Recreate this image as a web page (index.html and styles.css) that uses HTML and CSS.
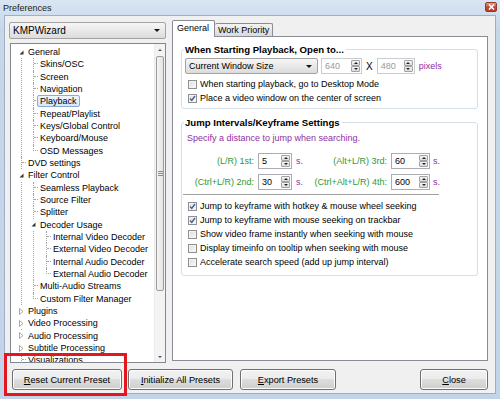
FILE: index.html
```html
<!DOCTYPE html>
<html>
<head>
    <meta charset="utf-8" />
    <title>Preferences</title>
    <link rel="stylesheet" href="styles.css">
</head>
<body>
<div class="window">
    <div class="titlebar">
        <span class="title">Preferences</span>
        <span class="close"><svg width="7" height="6" viewBox="0 0 7 6"><path d="M1 0.5L6 5.5M6 0.5L1 5.5" stroke="#fff" stroke-width="1.6"/></svg></span>
    </div>
    <div class="client">
        <div class="main">
            <div class="left">
                <div class="combo preset"><span>KMPWizard</span><i class="arrow"></i></div>
                <div class="tree">
                    <ul class="tree-list">
                        <li><div class="row"><span class="exp"><svg width="5" height="5" viewBox="0 0 5 5"><path d="M4.5 0.5V4.5H0.5Z" fill="#333"/></svg></span><span class="txt">General</span></div>
                            <ul>
                                <li><div class="row"><i class="conn"></i><span class="txt">Skins/OSC</span></div></li>
                                <li><div class="row"><i class="conn"></i><span class="txt">Screen</span></div></li>
                                <li><div class="row"><i class="conn"></i><span class="txt">Navigation</span></div></li>
                                <li><div class="row"><i class="conn"></i><span class="txt sel">Playback</span></div></li>
                                <li><div class="row"><i class="conn"></i><span class="txt">Repeat/Playlist</span></div></li>
                                <li><div class="row"><i class="conn"></i><span class="txt">Keys/Global Control</span></div></li>
                                <li><div class="row"><i class="conn"></i><span class="txt">Keyboard/Mouse</span></div></li>
                                <li><div class="row"><i class="conn"></i><span class="txt">OSD Messages</span></div></li>
                            </ul>
                        </li>
                        <li><div class="row"><i class="conn"></i><span class="txt">DVD settings</span></div></li>
                        <li><div class="row"><span class="exp"><svg width="5" height="5" viewBox="0 0 5 5"><path d="M4.5 0.5V4.5H0.5Z" fill="#333"/></svg></span><span class="txt">Filter Control</span></div>
                            <ul>
                                <li><div class="row"><i class="conn"></i><span class="txt">Seamless Playback</span></div></li>
                                <li><div class="row"><i class="conn"></i><span class="txt">Source Filter</span></div></li>
                                <li><div class="row"><i class="conn"></i><span class="txt">Splitter</span></div></li>
                                <li><div class="row"><span class="exp"><svg width="5" height="5" viewBox="0 0 5 5"><path d="M4.5 0.5V4.5H0.5Z" fill="#333"/></svg></span><span class="txt">Decoder Usage</span></div>
                                    <ul>
                                        <li><div class="row"><i class="conn"></i><span class="txt">Internal Video Decoder</span></div></li>
                                        <li><div class="row"><i class="conn"></i><span class="txt">External Video Decoder</span></div></li>
                                        <li><div class="row"><i class="conn"></i><span class="txt">Internal Audio Decoder</span></div></li>
                                        <li><div class="row"><i class="conn"></i><span class="txt">External Audio Decoder</span></div></li>
                                    </ul>
                                </li>
                                <li><div class="row"><i class="conn"></i><span class="txt">Multi-Audio Streams</span></div></li>
                                <li><div class="row"><i class="conn"></i><span class="txt">Custom Filter Manager</span></div></li>
                            </ul>
                        </li>
                        <li><div class="row"><span class="exp"><svg width="5" height="7" viewBox="0 0 5 7"><path d="M0.5 0.5L4 3.5L0.5 6.5Z" fill="#fff" stroke="#a8a8a8"/></svg></span><span class="txt">Plugins</span></div></li>
                        <li><div class="row"><span class="exp"><svg width="5" height="7" viewBox="0 0 5 7"><path d="M0.5 0.5L4 3.5L0.5 6.5Z" fill="#fff" stroke="#a8a8a8"/></svg></span><span class="txt">Video Processing</span></div></li>
                        <li><div class="row"><span class="exp"><svg width="5" height="7" viewBox="0 0 5 7"><path d="M0.5 0.5L4 3.5L0.5 6.5Z" fill="#fff" stroke="#a8a8a8"/></svg></span><span class="txt">Audio Processing</span></div></li>
                        <li><div class="row"><span class="exp"><svg width="5" height="7" viewBox="0 0 5 7"><path d="M0.5 0.5L4 3.5L0.5 6.5Z" fill="#fff" stroke="#a8a8a8"/></svg></span><span class="txt">Subtitle Processing</span></div></li>
                        <li><div class="row"><i class="conn"></i><span class="txt">Visualizations</span></div></li>
                    </ul>
                    <div class="vscroll">
                        <div class="sb-btn"><i class="up"></i></div>
                        <div class="sb-track">
                            <div class="thumb"><i class="grip"></i></div>
                        </div>
                        <div class="sb-btn"><i class="down"></i></div>
                    </div>
                </div>
            </div>
            <div class="right">
                <div class="tabs">
                    <span class="tab active">General</span>
                    <span class="tab">Work Priority</span>
                </div>
                <div class="panel">
                    <div class="group g1">
                        <div class="legend">When Starting Playback, Open to...</div>
                        <div class="size-row">
                            <div class="combo size"><span>Current Window Size</span><i class="arrow"></i></div>
                            <div class="field off w640"><span>640</span><i class="spin"><b></b><b class="dn"></b></i></div>
                            <span class="times">X</span>
                            <div class="field off w480"><span>480</span><i class="spin"><b></b><b class="dn"></b></i></div>
                            <span class="purple">pixels</span>
                        </div>
                        <div class="check"><i class="box"></i>When starting playback, go to Desktop Mode</div>
                        <div class="check"><i class="box"><svg width="7" height="7" viewBox="0 0 7 7"><path d="M1 3.5L2.8 5.5L6 1" fill="none" stroke="#4a5f95" stroke-width="1.4"/></svg></i>Place a video window on the center of screen</div>
                    </div>
                    <div class="group g2">
                        <div class="legend">Jump Intervals/Keyframe Settings</div>
                        <div class="hint purple">Specify a distance to jump when searching.</div>
                        <div class="jump-row first">
                            <span class="lbl green">(L/R) 1st:</span>
                            <div class="field w-a"><span>5</span><i class="spin"><b></b><b class="dn"></b></i></div>
                            <span class="unit purple">s.</span>
                            <span class="lbl lbl2 green">(Alt+L/R) 3rd:</span>
                            <div class="field w-b"><span>60</span><i class="spin"><b></b><b class="dn"></b></i></div>
                            <span class="unit2 purple">s.</span>
                        </div>
                        <div class="jump-row">
                            <span class="lbl green">(Ctrl+L/R) 2nd:</span>
                            <div class="field w-a"><span>30</span><i class="spin"><b></b><b class="dn"></b></i></div>
                            <span class="unit purple">s.</span>
                            <span class="lbl lbl2 green">(Ctrl+Alt+L/R) 4th:</span>
                            <div class="field w-b"><span>600</span><i class="spin"><b></b><b class="dn"></b></i></div>
                            <span class="unit2 purple">s.</span>
                        </div>
                        <div class="sep"></div>
                        <div class="check"><i class="box"><svg width="7" height="7" viewBox="0 0 7 7"><path d="M1 3.5L2.8 5.5L6 1" fill="none" stroke="#4a5f95" stroke-width="1.4"/></svg></i>Jump to keyframe with hotkey &amp; mouse wheel seeking</div>
                        <div class="check"><i class="box"><svg width="7" height="7" viewBox="0 0 7 7"><path d="M1 3.5L2.8 5.5L6 1" fill="none" stroke="#4a5f95" stroke-width="1.4"/></svg></i>Jump to keyframe with mouse seeking on trackbar</div>
                        <div class="check"><i class="box"></i>Show video frame instantly when seeking with mouse</div>
                        <div class="check"><i class="box"></i>Display timeinfo on tooltip when seeking with mouse</div>
                        <div class="check"><i class="box"></i>Accelerate search speed (add up jump interval)</div>
                    </div>
                </div>
            </div>
        </div>
        <div class="buttons">
            <span class="btn b-reset"><u>R</u>eset Current Preset</span>
            <span class="btn b-init"><u>I</u>nitialize All Presets</span>
            <span class="btn b-export"><u>E</u>xport Presets</span>
            <span class="btn b-close"><u>C</u>lose</span>
        </div>
    </div>
    <div class="highlight"></div>
</div>
</body>
</html>
```

FILE: styles.css
```css
*{margin: 0;padding: 0;box-sizing: border-box;}
body{
    width: 500px;
    height: 399px;
    overflow: hidden;
    font-family: "Liberation Sans", Arial, sans-serif;
    font-size: 9px;
    color: #000;
}
.window{
    position: relative;
    width: 500px;
    height: 399px;
    background: linear-gradient(#d9e5f2, #c6d7ea 30px, #c3d4e8);
    display: flex;
    flex-direction: column;
}
.titlebar{
    height: 15px;
    display: flex;
    align-items: center;
    padding-left: 3px;
}
.title{
    color: #1b1b1b;
    font-size: 9px;
}
.close{
    margin-left: auto;
    margin-right: 3px;
    margin-top: -2px;
    width: 12px;
    height: 10px;
    border-radius: 2px;
    border: 1px solid #8c3b2d;
    background: linear-gradient(#e2a08f, #c9492f 50%, #c03a22);
    display: flex;
    align-items: center;
    justify-content: center;
}
.client{
    margin: 0 4px;
    height: 379px;
    border: 1px solid #9fb0c6;
    background-color: #f0f0f0;
    display: flex;
    flex-direction: column;
}
.main{
    display: flex;
    padding: 6px 7px 0 4px;
}
.left{
    width: 157px;
    display: flex;
    flex-direction: column;
    gap: 4px;
}
.combo{
    height: 17px;
    border: 1px solid #a3a3a3;
    border-radius: 2px;
    background: linear-gradient(#f6f6f6, #e9e9e9 50%, #dcdcdc);
    display: flex;
    align-items: center;
    padding-left: 3px;
}
.combo.preset{
    font-size: 10px;
}
.arrow{
    margin-left: auto;
    margin-right: 5px;
    border-left: 3px solid transparent;
    border-right: 3px solid transparent;
    border-top: 3px solid #111;
}
.tree{
    height: 320px;
    margin-left: 1px;
    border: 1px solid #828790;
    background-color: #fff;
    display: flex;
    overflow: hidden;
}
.tree-list, .tree-list ul{
    list-style: none;
}
.tree-list{
    flex: 1;
    padding: 2px 0 0 10px;
    overflow: hidden;
}
.tree-list ul{
    margin-left: 11px;
}
.tree-list ul ul{
    margin-left: 12px;
}
.tree-list li{
    border-left: 1px dotted #a6a6a6;
}
.tree-list ul li:last-child{
    border-left-color: transparent;
}
.row{
    height: 12.33px;
    display: flex;
    align-items: center;
    white-space: nowrap;
}
.conn{
    flex: none;
    align-self: flex-start;
    width: 4px;
    height: 6px;
    border-bottom: 1px dotted #a6a6a6;
}
.tree-list ul li:last-child > .row > .conn{
    margin-left: -1px;
    width: 5px;
    border-left: 1px dotted #a6a6a6;
}
.exp{
    flex: none;
    width: 9px;
    height: 12px;
    margin-left: -5px;
    background-color: #fff;
    display: flex;
    align-items: center;
    justify-content: center;
}
.txt{
    border: 1px solid transparent;
    padding: 0 1px;
    line-height: 10px;
}
.txt.sel{
    border-color: #86acdc;
    border-radius: 2px;
    background: linear-gradient(#eef5fd, #d6e6fa);
    padding: 0 2px;
    margin-left: -1px;
}
.vscroll{
    width: 11px;
    background-color: #f3f3f3;
    border-left: 1px solid #ececec;
    display: flex;
    flex-direction: column;
}
.sb-btn{
    height: 11px;
    display: flex;
    align-items: center;
    justify-content: center;
}
.up, .down{
    border-left: 2px solid transparent;
    border-right: 2px solid transparent;
}
.up{border-bottom: 2px solid #555;}
.down{border-top: 2px solid #555;}
.sb-track{
    flex: 1;
    padding-top: 1px;
}
.thumb{
    margin: 0 1px;
    height: 235px;
    border: 1px solid #9b9b9b;
    border-radius: 2px;
    background: linear-gradient(90deg, #f4f4f4, #e4e4e4);
    display: flex;
    align-items: center;
    justify-content: center;
}
.grip{
    width: 5px;
    height: 5px;
    border-top: 1px solid #8c8c8c;
    border-bottom: 1px solid #8c8c8c;
    background: linear-gradient(transparent 1px, #8c8c8c 1px, #8c8c8c 2px, transparent 2px);
}
.right{
    flex: 1;
    margin: -2px 0 0 6px;
}
.tabs{
    height: 16px;
    display: flex;
    align-items: flex-end;
    position: relative;
    z-index: 1;
}
.tab{
    height: 13px;
    padding: 0 3px 0 3px;
    border: 1px solid #898c95;
    border-bottom: none;
    border-left: none;
    border-radius: 2px 2px 0 0;
    background: linear-gradient(#f3f3f3, #e6e6e6 50%, #dadada);
    display: flex;
    align-items: center;
    font-size: 9px;
}
.tab.active{
    height: 17px;
    margin-bottom: -1px;
    padding: 0 5px 2px 4px;
    border-left: 1px solid #898c95;
    background: #fff;
}
.panel{
    height: 325px;
    border: 1px solid #898c95;
    background-color: #fff;
    padding: 12px 9px 0 8px;
}
.group{
    border: 1px solid #d5dfe5;
    border-radius: 3px;
}
.legend{
    width: fit-content;
    margin: -6px 0 0 2px;
    padding: 0 2px 0 1px;
    background-color: #fff;
    font-weight: bold;
    font-size: 9.6px;
    height: 11px;
    line-height: 11px;
}
.g1{
    height: 60px;
}
.size-row{
    display: flex;
    align-items: center;
    margin: 3px 0 0 3px;
}
.combo.size{
    width: 133px;
    height: 16px;
}
.field{
    height: 16px;
    border: 1px solid #abadb3;
    background-color: #fff;
    display: flex;
    align-items: center;
    padding-left: 3px;
}
.field.off{
    border-color: #c9cdd3;
    color: #9a9a9a;
}
.field span{
    flex: 1;
}
.w640{
    width: 41px;
    margin-left: 3px;
}
.w480{
    width: 38px;
}
.times{
    margin: 0 4px;
    font-size: 10px;
}
.spin{
    width: 9px;
    height: 12px;
    margin-right: 1px;
    display: flex;
    flex-direction: column;
}
.spin b{
    flex: 1;
    border: 1px solid #a2a2a2;
    border-radius: 1px;
    background: linear-gradient(#f4f4f4, #dcdcdc);
    display: flex;
    align-items: center;
    justify-content: center;
}
.spin b::after{
    content: "";
    border-left: 2px solid transparent;
    border-right: 2px solid transparent;
    border-bottom: 2px solid #222;
}
.spin b.dn::after{
    border-bottom: none;
    border-top: 2px solid #222;
}
.purple{
    color: #8f2f9f;
}
.green{
    color: #2f9934;
}
.size-row .purple{
    margin-left: 4px;
}
.check{
    height: 14px;
    display: flex;
    align-items: center;
    padding-left: 6px;
    white-space: nowrap;
}
.size-row + .check{
    margin-top: 3px;
}
.box{
    width: 9px;
    height: 9px;
    margin-right: 3px;
    border: 1px solid #8f8f8f;
    background: linear-gradient(135deg, #dcdcdc, #fbfbfb);
    box-shadow: inset 0 0 0 1px #f4f4f4;
    display: flex;
    align-items: center;
    justify-content: center;
}
.g2{
    margin-top: 13px;
    height: 154px;
}
.hint{
    margin: 4px 0 0 5px;
    height: 12px;
    line-height: 12px;
}
.jump-row{
    display: flex;
    align-items: center;
    margin-top: 5px;
    padding-left: 4px;
}
.jump-row.first{
    margin-top: 9px;
}
.lbl{
    width: 68px;
    text-align: right;
    white-space: nowrap;
}
.lbl2{
    width: 79px;
}
.w-a{
    width: 34px;
    margin-left: 4px;
}
.w-b{
    width: 39px;
    margin-left: 4px;
}
.unit{
    width: 12px;
    margin-left: 4px;
}
.unit2{
    margin-left: 3px;
}
.sep{
    margin: 4px 0 0 1px;
    width: 256px;
    height: 2px;
    border-top: 1px solid #a0a0a0;
    border-bottom: 1px solid #fff;
}
.sep + .check{
    margin-top: 3px;
}
.buttons{
    display: flex;
    margin-top: 6px;
    padding: 0 7px 0 7px;
}
.btn{
    height: 21px;
    border: 1px solid #707070;
    border-radius: 3px;
    background: linear-gradient(#f2f2f2, #ebebeb 50%, #dddddd 50%, #cfcfcf);
    box-shadow: inset 0 0 0 1px #fcfcfc;
    display: flex;
    align-items: center;
    justify-content: center;
    font-size: 9.2px;
}
.b-reset{width: 110px;}
.b-init{width: 105px; margin-left: 6px;}
.b-export{width: 96px; margin-left: 7px;}
.b-close{width: 68px; margin-left: auto;}
.highlight{
    position: absolute;
    left: 4px;
    top: 353px;
    width: 123px;
    height: 43px;
    border: 3px solid #e2171f;
}
```
